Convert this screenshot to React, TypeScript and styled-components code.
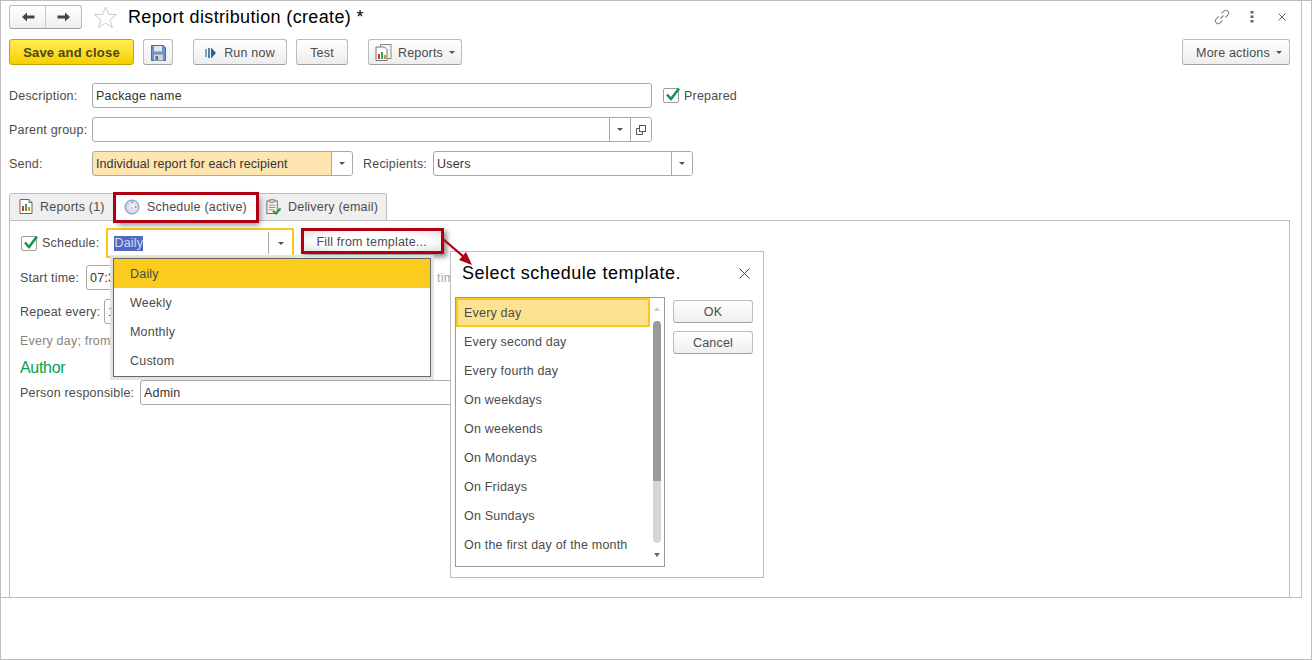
import React from "react";
import styled, { createGlobalStyle } from "styled-components";

const Global = createGlobalStyle`
  html, body { margin: 0; padding: 0; background: #fff; }
  body { font-family: "Liberation Sans", Arial, sans-serif; font-size: 12.5px; letter-spacing: 0.2px; color: #4b4b4b; }
  * { box-sizing: border-box; }
`;

const Page = styled.div`
  position: relative;
  width: 1312px;
  height: 660px;
  border: 1px solid #bdbdbd;
  overflow: hidden;
  background: #fff;
`;
const Form = styled.div`
  width: 1301px;
  height: 597px;
  border-right: 1px solid #bdbdbd;
  border-bottom: 1px solid #bdbdbd;
  padding: 4px 11px 0 8px;
  display: flex;
  flex-direction: column;
`;
const Header = styled.div`
  display: flex;
  align-items: center;
  height: 24px;
`;
const NavGroup = styled.div`
  display: flex;
  width: 73px;
  height: 24px;
  border: 1px solid #b9b9b9;
  border-bottom-color: #9d9d9d;
  border-radius: 3px;
  background: linear-gradient(#fff, #efefef);
`;
const NavBtn = styled.div<{ $sep?: boolean }>`
  flex: 1;
  display: flex;
  align-items: center;
  justify-content: center;
  border-right: ${(p) => (p.$sep ? "1px solid #c8c8c8" : "none")};
`;
const StarWrap = styled.div`
  margin-left: 11px;
  width: 26px;
  height: 24px;
  display: flex;
`;
const Title = styled.div`
  margin-left: 9px;
  font-size: 18px;
  letter-spacing: 0.36px;
  color: #000;
  white-space: nowrap;
`;
const HeaderIcons = styled.div`
  margin-left: auto;
  display: flex;
  align-items: center;
  margin-right: -7px;
`;
const HeaderIcon = styled.div<{ $w: number }>`
  width: ${(p) => p.$w}px;
  display: flex;
  justify-content: center;
`;
const Toolbar = styled.div`
  display: flex;
  align-items: stretch;
  height: 26px;
  margin-top: 10px;
`;
const Btn = styled.div<{ $w: number; $ml?: number; $auto?: boolean; $pl?: number }>`
  width: ${(p) => p.$w}px;
  margin-left: ${(p) => (p.$auto ? "auto" : `${p.$ml ?? 0}px`)};
  padding-left: ${(p) => p.$pl ?? 0}px;
  padding-top: 1px;
  display: flex;
  align-items: center;
  justify-content: center;
  gap: 6px;
  border: 1px solid #bcbcbc;
  border-bottom-color: #a0a0a0;
  border-radius: 3px;
  background: linear-gradient(#ffffff, #ededed);
  color: #4b4b4b;
  white-space: nowrap;
`;
const RunLabel = styled.span`
  margin-left: 2px;
`;
const SaveBtn = styled.div`
  width: 125px;
  display: flex;
  align-items: center;
  justify-content: center;
  border: 1px solid #c2a400;
  border-radius: 3px;
  background: linear-gradient(#ffee55, #f6cf00);
  color: #4f4419;
  font-weight: bold;
  font-size: 13px;
  letter-spacing: 0.2px;
`;
const Caret = styled.span`
  display: inline-block;
  width: 0;
  height: 0;
  border-left: 3px solid transparent;
  border-right: 3px solid transparent;
  border-top: 3px solid #555;
`;
const Fields = styled.div`
  margin-top: 18px;
  display: flex;
  flex-direction: column;
  gap: 9px;
`;
const Row = styled.div`
  display: flex;
  align-items: center;
  height: 25px;
`;
const Label = styled.div<{ $w?: number; $ml?: number; $muted?: boolean }>`
  width: ${(p) => (p.$w ? `${p.$w}px` : "auto")};
  margin-left: ${(p) => p.$ml ?? 0}px;
  flex: none;
  white-space: nowrap;
  color: ${(p) => (p.$muted ? "#a8a5b2" : "#4b4b4b")};
`;
const CheckLabel = styled.div`
  margin-left: 11px;
  display: flex;
  align-items: center;
  gap: 5px;
  white-space: nowrap;
`;
const Field = styled.div<{ $w: number; $bg?: string; $tight?: boolean }>`
  width: ${(p) => p.$w}px;
  flex: none;
  height: 25px;
  display: flex;
  align-items: stretch;
  border: 1px solid #a9a9a9;
  border-radius: 3px;
  background: ${(p) => p.$bg ?? "#fff"};
  overflow: hidden;
  color: #333;
  letter-spacing: ${(p) => (p.$tight ? "0.09px" : "inherit")};
`;
const FieldText = styled.div`
  flex: 1;
  padding-left: 3px;
  display: flex;
  align-items: center;
  white-space: nowrap;
`;
const FieldBtn = styled.div`
  width: 21px;
  flex: none;
  display: flex;
  align-items: center;
  justify-content: center;
  border-left: 1px solid #a9a9a9;
  background: #fff;
`;
const CheckBox = styled.div<{ $ml?: number }>`
  width: 16px;
  height: 15px;
  margin-left: ${(p) => p.$ml ?? 0}px;
  flex: none;
  border: 1px solid #9d9d9d;
  border-radius: 2px;
  background: #fff;
  position: relative;
`;
const CheckMark = styled.svg`
  position: absolute;
  left: 0;
  top: -4px;
`;
const Tabs = styled.div`
  margin-top: 17px;
  display: flex;
  width: 378px;
  height: 28px;
  border: 1px solid #bdbdbd;
  border-bottom: none;
  border-radius: 3px 3px 0 0;
  background: #efefef;
`;
const Tab = styled.div<{ $w: number; $active?: boolean }>`
  position: relative;
  z-index: ${(p) => (p.$active ? 2 : 0)};
  width: ${(p) => p.$w}px;
  display: flex;
  align-items: center;
  gap: 7px;
  padding: 0 0 2px 9px;
  white-space: nowrap;
  background: ${(p) => (p.$active ? "#fff" : "transparent")};
  ${(p) =>
    p.$active
      ? `outline: 3px solid #ae0010; outline-offset: -1px; box-shadow: 3px 4px 6px rgba(0,0,0,.45);`
      : ""}
`;
const Panel = styled.div`
  flex: 1;
  margin-top: -1px;
  border: 1px solid #bdbdbd;
  border-bottom: none;
  padding: 7px 10px 0 10px;
  display: flex;
  flex-direction: column;
`;
const ScheduleRow = styled.div`
  display: flex;
  align-items: center;
  height: 30px;
`;
const FocusField = styled.div`
  margin-left: 7px;
  width: 188px;
  height: 30px;
  display: flex;
  border: 2px solid #f9c71d;
  background: #fff;
  color: #333;
`;
const Selected = styled.span`
  background: #4f69c4;
  color: #d3daf0;
  align-self: center;
  line-height: 15px;
`;
const FocusText = styled.div`
  flex: 1;
  padding-left: 6px;
  display: flex;
`;
const FocusBtn = styled.div`
  width: 24px;
  margin: 2px 0;
  display: flex;
  align-items: center;
  justify-content: center;
  border-left: 1px solid #a9a9a9;
`;
const TemplateBtn = styled.div`
  margin: 0 0 4px 7px;
  width: 143px;
  height: 26px;
  display: flex;
  align-items: center;
  padding: 1px 0 0 12px;
  border: 3px solid #ae0010;
  background: radial-gradient(ellipse at center, #fff 55%, #e0e0e0 100%);
  box-shadow: 3px 3px 5px rgba(0, 0, 0, 0.45);
  white-space: nowrap;
`;
const PanelRow = styled.div<{ $mt: number }>`
  display: flex;
  align-items: center;
  height: 25px;
  margin-top: ${(p) => p.$mt}px;
`;
const Summary = styled.div`
  margin-top: 10px;
  height: 16px;
  color: #8a8578;
  white-space: nowrap;
`;
const SectionTitle = styled.div`
  margin-top: 9px;
  height: 20px;
  font-size: 16px;
  letter-spacing: -0.3px;
  color: #00a24f;
`;
const Menu = styled.div`
  position: absolute;
  left: 112px;
  top: 257px;
  width: 318px;
  height: 119px;
  background: #fff;
  border: 1px solid #666;
  box-shadow: 0 0 0 3px rgba(225, 225, 225, 0.9);
  z-index: 3;
`;
const MenuItem = styled.div<{ $on?: boolean }>`
  height: 29px;
  display: flex;
  align-items: center;
  padding-left: 16px;
  background: ${(p) => (p.$on ? "#fbcb1e" : "#fff")};
  color: #4b4b4b;
`;
const Dialog = styled.div`
  position: absolute;
  left: 449px;
  top: 250px;
  width: 314px;
  height: 327px;
  background: #fff;
  border: 1px solid #bdbdbd;
  z-index: 4;
  padding: 0 10px 0 4px;
  display: flex;
  flex-direction: column;
`;
const DialogHead = styled.div`
  height: 45px;
  display: flex;
  align-items: center;
  padding: 0 0 3px 7px;
  font-size: 18px;
  letter-spacing: 0.52px;
  color: #000;
`;
const DialogClose = styled.div`
  margin-left: auto;
  display: flex;
  margin-right: 3px;
`;
const DialogBody = styled.div`
  display: flex;
  align-items: flex-start;
`;
const ListBox = styled.div`
  position: relative;
  width: 210px;
  height: 270px;
  border: 1px solid #9a9a9a;
  overflow: hidden;
`;
const ListItem = styled.div<{ $on?: boolean }>`
  width: 194px;
  height: 29px;
  display: flex;
  align-items: center;
  padding-left: ${(p) => (p.$on ? 6 : 8)}px;
  background: ${(p) => (p.$on ? "#fde38f" : "#fff")};
  border: ${(p) => (p.$on ? "2px solid #f9c71d" : "none")};
  color: #4b4b4b;
  white-space: nowrap;
`;
const Scroll = styled.div`
  position: absolute;
  right: 2px;
  top: 0;
  bottom: 0;
  width: 10px;
`;
const ScrollBar = styled.div`
  position: absolute;
  left: 1px;
  width: 8px;
  top: 23px;
  height: 222px;
  border-radius: 4px;
  background: linear-gradient(#9b9b9b 0, #9b9b9b 72%, #d5d5d5 72%, #d5d5d5 100%);
`;
const ScrollArrow = styled.div<{ $up?: boolean }>`
  position: absolute;
  left: 2px;
  width: 0;
  height: 0;
  border-left: 3px solid transparent;
  border-right: 3px solid transparent;
  ${(p) =>
    p.$up
      ? "top: 9px; border-bottom: 4px solid #c9c9c9;"
      : "bottom: 9px; border-top: 4px solid #666;"}
`;
const DialogBtns = styled.div`
  margin-left: 8px;
  margin-top: 3px;
  display: flex;
  flex-direction: column;
  gap: 8px;
`;
const DialogBtn = styled.div`
  width: 80px;
  height: 23px;
  display: flex;
  align-items: center;
  justify-content: center;
  border: 1px solid #bcbcbc;
  border-bottom-color: #a0a0a0;
  border-radius: 3px;
  background: linear-gradient(#ffffff, #efefef);
`;
const ArrowOverlay = styled.svg`
  position: absolute;
  left: 438px;
  top: 234px;
  z-index: 5;
  overflow: visible;
`;

const Check = ({ ml }: { ml?: number }) => (
  <CheckBox $ml={ml}>
    <CheckMark width="18" height="18" viewBox="0 0 18 18">
      <path d="M3 9.5 L7 14 L15 3.5" fill="none" stroke="#0c9a4c" strokeWidth="2.6" />
    </CheckMark>
  </CheckBox>
);
const NavArrow = ({ flip }: { flip?: boolean }) => (
  <svg width="14" height="12" viewBox="0 0 14 12" style={flip ? { transform: "scaleX(-1)" } : undefined}>
    <path d="M1 6 L6 1.5 V4.5 H13.5 V7.5 H6 V10.5 Z" fill="#444" />
  </svg>
);
const Star = () => (
  <svg width="25" height="24" viewBox="0 0 26 24">
    <path d="M13 1.5 L16 9.2 L24.5 9.6 L17.8 14.8 L20.2 23 L13 18.3 L5.8 23 L8.2 14.8 L1.5 9.6 L10 9.2 Z" fill="#fff" stroke="#c8c8c8" />
  </svg>
);
const Floppy = () => (
  <svg width="15" height="16" viewBox="0 0 15 16">
    <path d="M0.5 0.5 H12.5 L14.5 2.5 V15.5 H0.5 Z" fill="#6f93c6" stroke="#4a6c9f" />
    <rect x="3" y="1" width="8" height="5.5" fill="#dfe8f3" />
    <rect x="3" y="9.5" width="9" height="6" fill="#cfd3d8" />
    <rect x="4.5" y="11" width="2.5" height="4" fill="#5d6f88" />
  </svg>
);
const RunIcon = () => (
  <svg width="11" height="12" viewBox="0 0 11 12">
    <rect x="0" y="2" width="2" height="8" fill="#7fa3cf" />
    <rect x="3" y="1" width="2" height="10" fill="#4f81bd" />
    <path d="M6 0.5 L11 6 L6 11.5 Z" fill="#2c6199" />
  </svg>
);
const ReportsIcon = () => (
  <svg width="17" height="17" viewBox="0 0 17 17">
    <rect x="5.5" y="0.5" width="10.5" height="14" fill="#f4f4f4" stroke="#8a8a8a" />
    <path d="M1 3 H9.5 L12 5.5 V16.5 H1 Z" fill="#fff" stroke="#777" />
    <rect x="3" y="10" width="2" height="5" fill="#d4362c" />
    <rect x="6" y="8" width="2" height="7" fill="#3aa655" />
    <rect x="9" y="11" width="2" height="4" fill="#d98c1f" />
  </svg>
);
const TabReports = () => (
  <svg width="14" height="15" viewBox="0 0 14 15">
    <path d="M1 0.5 H10 L13 3.5 V14.5 H1 Z" fill="#fff" stroke="#666" />
    <path d="M10 0.5 V3.5 H13" fill="#ddd" stroke="#666" />
    <rect x="3" y="7" width="2" height="5" fill="#d4362c" />
    <rect x="6" y="5" width="2" height="7" fill="#3aa655" />
    <rect x="9" y="8" width="2" height="4" fill="#d98c1f" />
  </svg>
);
const TabClock = () => (
  <svg width="16" height="16" viewBox="0 0 16 16">
    <defs>
      <radialGradient id="clk" cx="0.55" cy="0.5" r="0.6">
        <stop offset="0" stopColor="#f4f6fb" />
        <stop offset="0.7" stopColor="#cdd9ee" />
        <stop offset="1" stopColor="#7f9fd4" />
      </radialGradient>
    </defs>
    <circle cx="8" cy="8" r="7" fill="url(#clk)" stroke="#7f97c6" />
    <path d="M8 2.5 V4 M12.5 8 H11 M8 8.5 V9.5" stroke="#d9534f" strokeWidth="1.3" />
  </svg>
);
const TabDelivery = () => (
  <svg width="15" height="18" viewBox="0 0 16 18">
    <rect x="1" y="2.5" width="11" height="13.5" fill="#fdf6e3" stroke="#666" />
    <rect x="4" y="1" width="5" height="3" fill="#c9c9c9" stroke="#666" strokeWidth="0.6" />
    <path d="M3 7 H10 M3 9.5 H10 M3 12 H8" stroke="#888" />
    <path d="M7.5 13 L10.5 16 L15.5 10.5" fill="none" stroke="#17a03c" strokeWidth="2.2" />
  </svg>
);

const listItems = [
  "Every second day",
  "Every fourth day",
  "On weekdays",
  "On weekends",
  "On Mondays",
  "On Fridays",
  "On Sundays",
  "On the first day of the month",
];

export default function App() {
  return (
    <Page>
      <Global />
      <Form>
        <Header>
          <NavGroup>
            <NavBtn $sep><NavArrow /></NavBtn>
            <NavBtn><NavArrow flip /></NavBtn>
          </NavGroup>
          <StarWrap><Star /></StarWrap>
          <Title>Report distribution (create) *</Title>
          <HeaderIcons>
            <HeaderIcon $w={30}>
              <svg width="16" height="16" viewBox="0 0 16 16" fill="none" stroke="#8a8a8a" strokeWidth="1.1">
                <path d="M6.5 9.5 L9.5 6.5" />
                <path d="M7.5 4.5 L9.8 2.2 a2.6 2.6 0 0 1 3.9 3.9 L11.3 8.5" />
                <path d="M8.5 11.5 L6.2 13.8 a2.6 2.6 0 0 1 -3.9 -3.9 L4.7 7.5" />
              </svg>
            </HeaderIcon>
            <HeaderIcon $w={30}>
              <svg width="4" height="12" viewBox="0 0 4 12" fill="#666">
                <rect x="0.5" y="0" width="3" height="2.5" />
                <rect x="0.5" y="4.5" width="3" height="2.5" />
                <rect x="0.5" y="9" width="3" height="2.5" />
              </svg>
            </HeaderIcon>
            <HeaderIcon $w={30}>
              <svg width="8" height="8" viewBox="0 0 8 8" stroke="#666" strokeWidth="1">
                <path d="M0.5 0.5 L7.5 7.5 M7.5 0.5 L0.5 7.5" />
              </svg>
            </HeaderIcon>
          </HeaderIcons>
        </Header>
        <Toolbar>
          <SaveBtn>Save and close</SaveBtn>
          <Btn $w={30} $ml={9}><Floppy /></Btn>
          <Btn $w={94} $ml={20}><RunIcon /><RunLabel>Run now</RunLabel></Btn>
          <Btn $w={52} $ml={9}>Test</Btn>
          <Btn $w={94} $ml={20}><ReportsIcon /><span>Reports</span><Caret /></Btn>
          <Btn $w={108} $auto $pl={6}>More actions<Caret /></Btn>
        </Toolbar>
        <Fields>
          <Row>
            <Label $w={83}>Description:</Label>
            <Field $w={560}><FieldText>Package name</FieldText></Field>
            <CheckLabel><Check />Prepared</CheckLabel>
          </Row>
          <Row>
            <Label $w={83}>Parent group:</Label>
            <Field $w={560}>
              <FieldText />
              <FieldBtn><Caret /></FieldBtn>
              <FieldBtn>
                <svg width="10" height="10" viewBox="0 0 10 10" fill="none" stroke="#555">
                  <rect x="3.5" y="0.5" width="6" height="6" />
                  <path d="M3 3.5 H0.5 V9.5 H6.5 V7" />
                </svg>
              </FieldBtn>
            </Field>
          </Row>
          <Row>
            <Label $w={83}>Send:</Label>
            <Field $w={261} $bg="#fee5b0" $tight>
              <FieldText>Individual report for each recipient</FieldText>
              <FieldBtn><Caret /></FieldBtn>
            </Field>
            <Label $w={70} $ml={10}>Recipients:</Label>
            <Field $w={260}>
              <FieldText>Users</FieldText>
              <FieldBtn><Caret /></FieldBtn>
            </Field>
          </Row>
        </Fields>
        <Tabs>
          <Tab $w={105}><TabReports />Reports (1)</Tab>
          <Tab $w={142} $active><TabClock />Schedule (active)</Tab>
          <Tab $w={129}><TabDelivery />Delivery (email)</Tab>
        </Tabs>
        <Panel>
          <ScheduleRow>
            <Check ml={1} />
            <Label $ml={5}>Schedule:</Label>
            <FocusField>
              <FocusText><Selected>Daily</Selected></FocusText>
              <FocusBtn><Caret /></FocusBtn>
            </FocusField>
            <TemplateBtn>Fill from template...</TemplateBtn>
          </ScheduleRow>
          <PanelRow $mt={7}>
            <Label $w={66}>Start time:</Label>
            <Field $w={80}><FieldText>07:30</FieldText></Field>
            <Label $ml={271} $muted>time</Label>
          </PanelRow>
          <PanelRow $mt={9}>
            <Label $w={84}>Repeat every:</Label>
            <Field $w={80}><FieldText>1</FieldText></Field>
          </PanelRow>
          <Summary>Every day; from</Summary>
          <SectionTitle>Author</SectionTitle>
          <PanelRow $mt={1}>
            <Label $w={120}>Person responsible:</Label>
            <Field $w={500}><FieldText>Admin</FieldText></Field>
          </PanelRow>
        </Panel>
      </Form>

      <Menu>
        <MenuItem $on>Daily</MenuItem>
        <MenuItem>Weekly</MenuItem>
        <MenuItem>Monthly</MenuItem>
        <MenuItem>Custom</MenuItem>
      </Menu>

      <Dialog>
        <DialogHead>
          Select schedule template.
          <DialogClose>
            <svg width="11" height="11" viewBox="0 0 11 11" stroke="#444" strokeWidth="1">
              <path d="M0.5 0.5 L10.5 10.5 M10.5 0.5 L0.5 10.5" />
            </svg>
          </DialogClose>
        </DialogHead>
        <DialogBody>
          <ListBox>
            <ListItem $on>Every day</ListItem>
            {listItems.map((t) => (
              <ListItem key={t}>{t}</ListItem>
            ))}
            <Scroll>
              <ScrollArrow $up />
              <ScrollBar />
              <ScrollArrow />
            </Scroll>
          </ListBox>
          <DialogBtns>
            <DialogBtn>OK</DialogBtn>
            <DialogBtn>Cancel</DialogBtn>
          </DialogBtns>
        </DialogBody>
      </Dialog>

      <ArrowOverlay width="40" height="36" viewBox="0 0 40 36">
        <path d="M4 4 L26 23" stroke="#ae0010" strokeWidth="2.2" fill="none" />
        <path d="M33 30 L20 25 L27 17 Z" fill="#ae0010" />
      </ArrowOverlay>
    </Page>
  );
}
